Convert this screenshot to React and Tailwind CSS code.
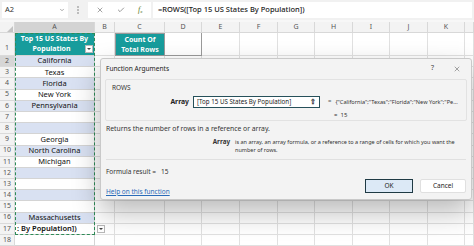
import { ChevronDown, X, Check } from 'lucide-react';

const cols = [
  'w-[15px]', 'w-[80px]', 'w-[20px]', 'w-[50px]', 'w-[37px]', 'w-[38px]', 'w-[38px]',
  'w-[37px]', 'w-[38px]', 'w-[37px]', 'w-[38px]', 'w-[37px]', 'flex-1',
];
const letters = ['', 'A', 'B', 'C', 'D', 'E', 'F', 'G', 'H', 'I', 'J', 'K', ''];

const states = {
  2: 'California', 3: 'Texas', 4: 'Florida', 5: 'New York', 6: 'Pennsylvania',
  9: 'Georgia', 10: 'North Carolina', 11: 'Michigan', 16: 'Massachusetts',
};

function DropBtn() {
  return (
    <div className="flex h-[8px] w-[8px] items-center justify-center border border-[#b8b8b8] bg-white">
      <div className="h-0 w-0 border-x-[2px] border-t-[2px] border-x-transparent border-t-[#444]" />
    </div>
  );
}

function Row({ n }) {
  const banded = n >= 2 && n <= 16 && n % 2 === 0;
  return (
    <div className="flex h-[11.2px]">
      <div className={`${cols[0]} flex items-center justify-center border-r border-b border-[#dadada] text-[7px] text-[#555] ${n === 2 ? 'bg-[#d6d6d6]' : 'bg-[#f3f3f3]'}`}>
        {n}
      </div>
      <div className={`${cols[1]} flex items-center justify-center overflow-hidden border-r border-b border-[#d4d4d4] text-[7.5px] text-[#111] ${banded ? 'bg-[#d9e1f2]' : 'bg-white'}`}>
        {n === 17 ? (
          <span className="w-full whitespace-nowrap pl-[2px] text-left font-semibold">: By Population])</span>
        ) : (
          states[n]
        )}
      </div>
      {cols.slice(2).map((c, i) => (
        <div key={i} className={`${c} flex items-center border-r border-b border-[#e1e1e1] bg-white pl-[2px]`}>
          {n === 17 && i === 0 ? <DropBtn /> : null}
        </div>
      ))}
    </div>
  );
}

export default function App() {
  const rows = [];
  for (let n = 2; n <= 18; n++) rows.push(<Row key={n} n={n} />);

  return (
    <div className="relative h-[246px] w-[474px] overflow-hidden bg-white font-['Noto_Sans',sans-serif]">
      {/* formula bar */}
      <div className="flex h-[20px] items-center gap-[2px] bg-[#f1f1f1] px-[2px]">
        <div className="flex h-[16px] w-[66px] items-center justify-between bg-white px-[3px] text-[7.5px] text-[#333]">
          <span>A2</span>
          <ChevronDown size={6} strokeWidth={2.5} className="text-[#777]" />
        </div>
        <div className="flex w-[16px] flex-col items-center gap-[1.5px]">
          <div className="h-[1.5px] w-[1.5px] rounded-full bg-[#aaa]" />
          <div className="h-[1.5px] w-[1.5px] rounded-full bg-[#aaa]" />
          <div className="h-[1.5px] w-[1.5px] rounded-full bg-[#aaa]" />
        </div>
        <div className="flex h-[16px] w-[63px] items-center justify-around bg-white px-[2px]">
          <X size={8} strokeWidth={1.6} className="text-[#555]" />
          <Check size={8} strokeWidth={1.8} className="text-[#555]" />
          <span className="font-['Liberation_Serif',serif] text-[8px] italic text-[#5a7a2a]">f<sub className="text-[5px]">x</sub></span>
        </div>
        <div className="flex h-[16px] flex-1 items-center bg-white pl-[5px] text-[7.5px] font-medium text-[#222]">
          =ROWS([Top 15 US States By Population])
        </div>
      </div>
      <div className="h-[2px] bg-[#f7f7f7]" />

      {/* column headers */}
      <div className="flex h-[11px] bg-[#f3f3f3]">
        {cols.map((c, i) => (
          <div key={i} className={`${c} flex items-center justify-center border-r border-b border-[#d8d8d8] text-[7px] text-[#555] ${i === 1 ? 'bg-[#d3d3d3]' : ''}`}>
            {i === 0 ? (
              <div className="ml-[5px] mt-[3px] h-0 w-0 border-b-[6px] border-l-[6px] border-b-[#c4c4c4] border-l-transparent" />
            ) : (
              letters[i]
            )}
          </div>
        ))}
      </div>

      {/* row 1 */}
      <div className="flex h-[23px]">
        <div className={`${cols[0]} flex items-end justify-center border-r border-b border-[#dadada] bg-[#f3f3f3] pb-[2px] text-[7px] text-[#555]`}>1</div>
        <div className={`${cols[1]} relative flex flex-col items-center justify-center border-r border-b border-[#d4d4d4] bg-[#179c9c] text-[7px] font-bold leading-[10px] text-white`}>
          <span>Top 15 US States By</span>
          <span className="pr-[6px]">Population</span>
          <div className="absolute right-[1px] bottom-[2px]"><DropBtn /></div>
        </div>
        <div className={`${cols[2]} border-r border-b border-[#e1e1e1] bg-white`} />
        <div className={`${cols[3]} flex flex-col items-center justify-center border border-[#9a9a9a] bg-[#179c9c] text-[7px] font-bold leading-[10px] text-white`}>
          <span>Count Of</span>
          <span>Total Rows</span>
        </div>
        {cols.slice(4).map((c, i) => (
          <div key={i} className={`${c} border-r border-b border-[#e1e1e1] bg-white ${i === 0 ? 'border-r-[#9a9a9a] border-b-[#9a9a9a]' : ''}`} />
        ))}
      </div>

      {rows}

      {/* copy range marquee */}
      <div className="absolute left-[15px] top-[33px] h-[202px] w-[80px] border border-dashed border-[#2e8b57]" />

      {/* dialog */}
      <div className="absolute left-[100px] top-[58px] h-[142px] w-[372px] rounded-[3px] border border-[#c9c9c9] bg-[#f3f3f3] text-[#222] shadow-[0_12px_28px_rgba(0,0,0,0.28)]">
        <div className="flex h-[19px] items-center justify-between pl-[5px] pr-[10px] text-[6.6px]">
          <span>Function Arguments</span>
          <div className="flex items-center gap-[19px] text-[#444]">
            <span className="text-[7px]">?</span>
            <X size={8} strokeWidth={1.4} />
          </div>
        </div>

        <div className="mx-[4px] mt-[1px] h-[42px] rounded-[2px] border border-[#e2e2e2] pl-[6px] pt-[3px]">
          <div className="text-[6.5px] text-[#333]">ROWS</div>
          <div className="mt-[3px] flex items-center">
            <span className="w-[81px] pr-[4px] text-right text-[6.8px] font-bold">Array</span>
            <div className="flex h-[12px] w-[127px] items-center justify-between border-[1.5px] border-[#26505a] bg-white px-[3px] text-[6.2px] text-[#222]">
              <span className="whitespace-nowrap">[Top 15 US States By Population]</span>
              <span className="text-[7px] font-bold leading-none">⇧</span>
            </div>
            <span className="ml-[8px] text-[6px] text-[#555]">=</span>
            <span className="ml-[4px] whitespace-nowrap text-[5.6px] text-[#333]">
              {'{"California";"Texas";"Florida";"New York";"Pe...'}
            </span>
          </div>
          <div className="ml-[222px] mt-[3px] text-[6px] text-[#333]">=&nbsp;&nbsp;15</div>
        </div>

        <div className="mt-[3px] pl-[5px] text-[6.8px] text-[#333]">Returns the number of rows in a reference or array.</div>
        <div className="mt-[4px] flex text-[5.5px] leading-[8px] text-[#333]">
          <span className="w-[134px] shrink-0 pr-[5px] text-right text-[6.3px] font-bold">Array</span>
          <div className="flex flex-col whitespace-nowrap">
            <span>is an array, an array formula, or a reference to a range of cells for which you want the</span>
            <span>number of rows.</span>
          </div>
        </div>
        <div className="mx-[5px] mt-[5px] h-px bg-[#e0e0e0]" />
        <div className="mt-[7px] pl-[5px] text-[6.5px] text-[#333]">Formula result =&nbsp;&nbsp;&nbsp;15</div>
        <div className="flex items-center justify-between pl-[5px] pr-[5px]">
          <span className="mt-[10px] text-[6.5px] text-[#2a6bb8] underline">Help on this function</span>
          <div className="mt-[-2px] flex gap-[7px]">
            <div className="flex h-[14px] w-[48px] items-center justify-center border-[1.5px] border-[#1f3a44] bg-[#dce9f6] text-[6.5px]">OK</div>
            <div className="flex h-[14px] w-[46px] items-center justify-center rounded-[2px] border border-[#e0e0e0] bg-white text-[6.5px]">Cancel</div>
          </div>
        </div>
      </div>
    </div>
  );
}
